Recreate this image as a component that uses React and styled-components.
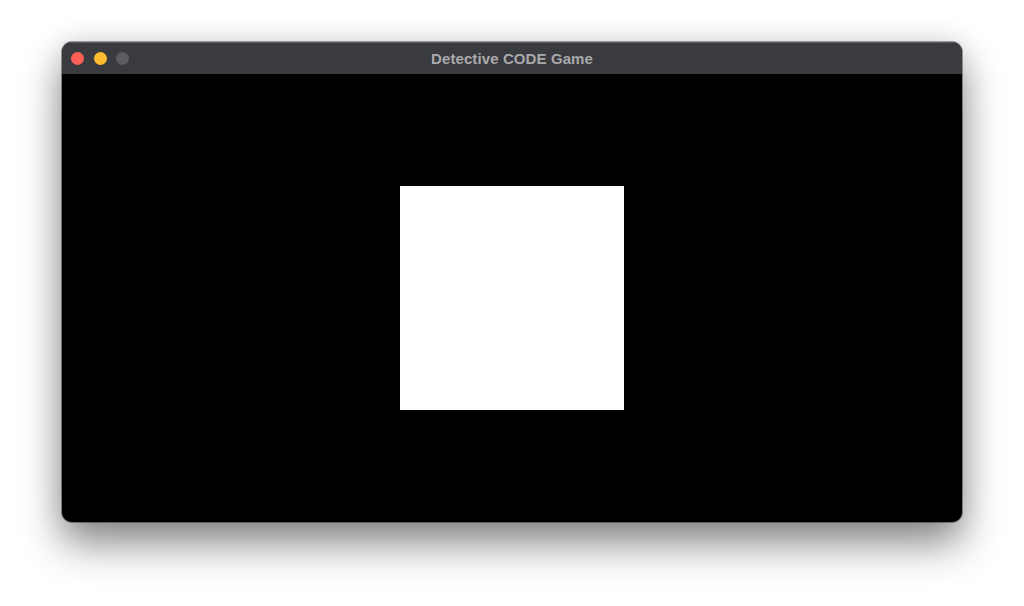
import React from "react";
import styled, { createGlobalStyle } from "styled-components";

const Global = createGlobalStyle`
  html, body { margin: 0; padding: 0; background: #ffffff; }
  body { font-family: "Liberation Sans", Arial, sans-serif; }
`;

const Page = styled.div`
  width: 1024px;
  height: 606px;
  display: flex;
  justify-content: center;
  align-items: flex-start;
  padding-top: 42px;
  box-sizing: border-box;
  background: #ffffff;
`;

const Window = styled.div`
  width: 900px;
  height: 480px;
  border-radius: 10px;
  overflow: hidden;
  display: flex;
  flex-direction: column;
  background: #000;
  box-shadow: 0 0 0 1px rgba(0,0,0,0.35), 0 22px 40px rgba(0,0,0,0.45), 0 0 30px rgba(0,0,0,0.12);
`;

const TitleBar = styled.div`
  position: relative;
  height: 32px;
  flex: none;
  background: #3a3b3f;
  display: flex;
  align-items: center;
  justify-content: center;
  box-shadow: inset 0 1px 0 rgba(255,255,255,0.18);
`;

const Lights = styled.div`
  position: absolute;
  left: 9px;
  top: 0;
  bottom: 0;
  display: flex;
  align-items: center;
  gap: 9.5px;
`;

const Light = styled.span`
  width: 13px;
  height: 13px;
  border-radius: 50%;
  background: ${(p) => p.$color};
`;

const Title = styled.div`
  color: #a9a9ac;
  font-size: 15px;
  font-weight: 700;
  letter-spacing: 0.1px;
`;

const Content = styled.div`
  flex: 1;
  background: #000;
  display: flex;
  align-items: center;
  justify-content: center;
`;

const Square = styled.div`
  width: 224px;
  height: 224px;
  background: #ffffff;
`;

export default function App() {
  return (
    <>
      <Global />
      <Page>
        <Window>
          <TitleBar>
            <Lights>
              <Light $color="#fe5f57" />
              <Light $color="#febc2e" />
              <Light $color="#5b5c61" />
            </Lights>
            <Title>Detective CODE Game</Title>
          </TitleBar>
          <Content>
            <Square />
          </Content>
        </Window>
      </Page>
    </>
  );
}
